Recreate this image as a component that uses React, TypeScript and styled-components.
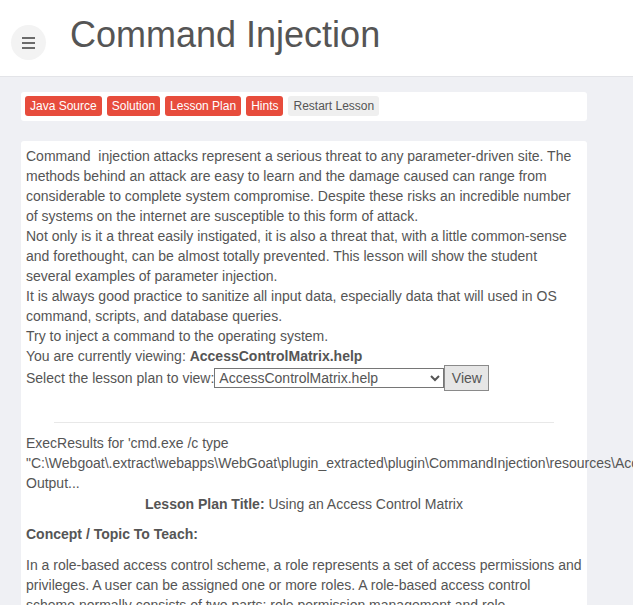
import React from "react";
import styled, { createGlobalStyle } from "styled-components";

const Global = createGlobalStyle`
  html, body { margin: 0; padding: 0; overflow: hidden; }
  body {
    background: #eff0f4;
    font-family: "Liberation Sans", Arial, sans-serif;
    color: #555;
  }
  * { box-sizing: border-box; }
`;

const Header = styled.header`
  height: 77px;
  background: #fff;
  border-bottom: 1px solid #e3e4e8;
  display: flex;
  align-items: flex-start;
`;

const MenuButton = styled.button`
  width: 35px;
  height: 35px;
  margin: 25px 0 0 11px;
  border: 0;
  padding: 0;
  border-radius: 50%;
  background: #f3f3f3;
  display: flex;
  align-items: center;
  justify-content: center;
  flex-shrink: 0;
`;

const Title = styled.h1`
  margin: 17px 0 0 24px;
  font-size: 36px;
  line-height: 36px;
  font-weight: 400;
  color: #555;
`;

const Main = styled.main`
  padding: 15px 46px 0 21px;
  display: flex;
  flex-direction: column;
  gap: 20px;
`;

const Bar = styled.div`
  background: #fff;
  border-radius: 3px;
  padding: 4px 4px 5px;
  display: flex;
  gap: 5px;
`;

const LessonButton = styled.button<{ $variant?: "red" | "plain" }>`
  height: 20px;
  padding: 0 5px;
  border: 0;
  border-radius: 3px;
  font-family: "Liberation Sans", Arial, sans-serif;
  font-size: 12px;
  line-height: 20px;
  background: ${(p) => (p.$variant === "plain" ? "#efefef" : "#e74c3c")};
  color: ${(p) => (p.$variant === "plain" ? "#555" : "#fff")};
`;

const Card = styled.section`
  background: #fff;
  border-radius: 3px;
  padding: 5px 5px 40px;
  font-size: 14px;
  line-height: 20px;
  color: #555;
`;

const Intro = styled.div``;

const FormRow = styled.form`
  display: flex;
  align-items: center;
  height: 26px;
  margin-top: -1px;
`;

const Select = styled.select`
  width: 230px;
  height: 20px;
  margin: 0;
  padding: 0;
  border: 1px solid #767676;
  border-radius: 0;
  background: #fff;
  font-family: "Liberation Sans", Arial, sans-serif;
  font-size: 14px;
  color: #555;
`;

const ViewButton = styled.button`
  width: 45px;
  height: 26px;
  margin: 0;
  padding: 0;
  border: 1px solid #8a8a8a;
  border-radius: 0;
  background: #e6e6e6;
  font-family: "Liberation Sans", Arial, sans-serif;
  font-size: 14px;
  color: #555;
`;

const Rule = styled.hr`
  width: 90%;
  height: 0;
  border: 0;
  border-top: 1px solid #e8e8e8;
  margin: 31px auto 10px;
`;

const Output = styled.div``;

const Centered = styled.p`
  text-align: center;
  margin: 1px 0 10px;
`;

const Para = styled.p`
  margin: 0 0 11px;
`;

export default function App() {
  return (
    <>
      <Global />
      <Header>
        <MenuButton aria-label="menu">
          <svg width="14" height="12" viewBox="0 0 14 12">
            <rect x="0" y="0" width="13" height="2" fill="#6b6b6b" />
            <rect x="0" y="5" width="13" height="2" fill="#6b6b6b" />
            <rect x="0" y="10" width="13" height="2" fill="#6b6b6b" />
          </svg>
        </MenuButton>
        <Title>Command Injection</Title>
      </Header>
      <Main>
        <Bar>
          <LessonButton>Java Source</LessonButton>
          <LessonButton>Solution</LessonButton>
          <LessonButton>Lesson Plan</LessonButton>
          <LessonButton>Hints</LessonButton>
          <LessonButton $variant="plain">Restart Lesson</LessonButton>
        </Bar>
        <Card>
          <Intro>
            Command&nbsp; injection attacks represent a serious threat to any parameter-driven site. The
            methods behind an attack are easy to learn and the damage caused can range from considerable
            to complete system compromise. Despite these risks an incredible number of systems on the
            internet are susceptible to this form of attack.
            <br />
            Not only is it a threat easily instigated, it is also a threat that, with a little
            common-sense and forethought, can be almost totally prevented. This lesson will show the
            student several examples of parameter injection.
            <br />
            It is always good practice to sanitize all input data, especially data that will used in OS
            command, scripts, and database queries.
            <br />
            Try to inject a command to the operating system.
            <br />
            You are currently viewing: <b>AccessControlMatrix.help</b>
          </Intro>
          <FormRow onSubmit={(e) => e.preventDefault()}>
            Select the lesson plan to view:
            <Select defaultValue="AccessControlMatrix.help">
              <option>AccessControlMatrix.help</option>
              <option>BackDoors.help</option>
              <option>BlindSqlInjection.help</option>
            </Select>
            <ViewButton type="submit">View</ViewButton>
          </FormRow>
          <Rule />
          <Output>
            ExecResults for 'cmd.exe /c type
            "C:\Webgoat\.extract\webapps\WebGoat\plugin_extracted\plugin\CommandInjection\resources\AccessControlMatrix.help"'
            <br />
            Output...
          </Output>
          <Centered>
            <b>Lesson Plan Title:</b> Using an Access Control Matrix
          </Centered>
          <Para>
            <b>Concept / Topic To Teach:</b>
          </Para>
          <Para>
            In a role-based access control scheme, a role represents a set of access permissions and
            privileges. A user can be assigned one or more roles. A role-based access control scheme
            normally consists of two parts: role permission management and role assignment. A broken
            role-based access control scheme might allow a user to perform accesses that are not allowed
            by his/her assigned roles, or somehow allow privilege escalation to an unauthorized role.
          </Para>
        </Card>
      </Main>
    </>
  );
}
